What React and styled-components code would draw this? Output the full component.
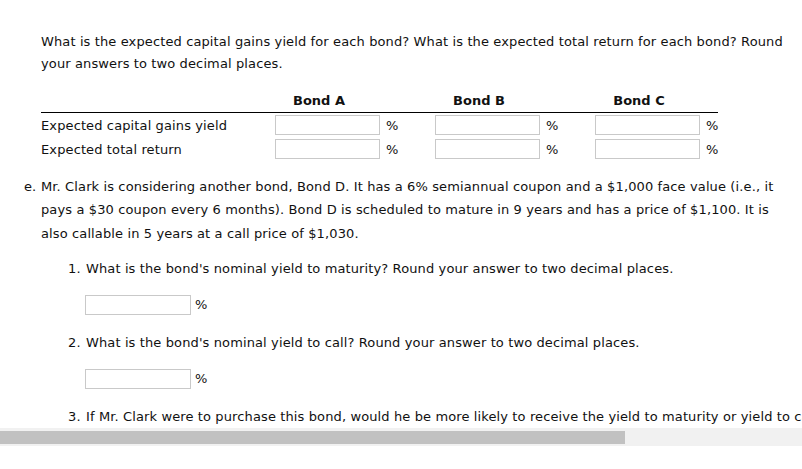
import React from "react";
import styled, { createGlobalStyle } from "styled-components";

const Global = createGlobalStyle`
  html, body { margin: 0; padding: 0; background: #fff; }
  body {
    font-family: "DejaVu Sans", Verdana, sans-serif;
    font-size: 13px;
    letter-spacing: 0.12px;
    color: #111;
  }
`;

const Viewport = styled.div`
  width: 802px;
  height: 428px;
  overflow: hidden;
`;

const Content = styled.div`
  width: 1029px;
  padding: 31px 0 0 24px;
  box-sizing: border-box;
`;

const Section = styled.div`
  width: 771px;
`;

const Para = styled.p`
  margin: 0 0 0 17px;
  line-height: 22px;
`;

const Table = styled.div`
  margin: 15px 0 0 17px;
  width: 677px;
  display: grid;
  grid-template-columns: 234px 105px 55px 105px 55px 105px 18px;
`;

const HeadCell = styled.div`
  line-height: 22px;
  font-weight: bold;
  letter-spacing: 0;
  text-align: center;
  padding-right: ${(p) => (p.$head ? "17px" : "0")};
  border-bottom: 1px solid #000;
`;

const Cell = styled.div`
  height: 24px;
  display: flex;
  align-items: center;
  padding-left: ${(p) => p.$pad || 0}px;
  white-space: nowrap;
`;

const Field = styled.input`
  box-sizing: border-box;
  width: ${(p) => p.$w || 105}px;
  height: 20px;
  margin: 0;
  padding: 0 3px;
  border: 1px solid #c9c9c9;
  border-radius: 0;
  background: #fff;
  font: inherit;
  outline: none;
`;

const Lettered = styled.div`
  margin-top: 14px;
  display: grid;
  grid-template-columns: 17px 1fr;
  line-height: 23.4px;
`;

const Marker = styled.span`
  white-space: nowrap;
`;

const SubList = styled.div`
  margin: 12px 0 0 44px;
  display: flex;
  flex-direction: column;
  gap: 16.6px;
`;

const SubItem = styled.div`
  display: grid;
  grid-template-columns: 18px 1fr;
  line-height: 23.4px;
`;

const Question = styled.div`
  white-space: ${(p) => (p.$nowrap ? "nowrap" : "normal")};
`;

const Answer = styled.div`
  grid-column: 2;
  margin-top: 14px;
  margin-left: -1px;
  display: flex;
  align-items: center;
  gap: 4px;
  height: 20px;
  line-height: 20px;
`;

const Track = styled.div`
  width: 802px;
  height: 18px;
  box-sizing: border-box;
  padding: 3px 0 2px;
  background: #f1f1f1;
`;

const Thumb = styled.div`
  width: ${(p) => p.$w}px;
  height: 13px;
  background: #c1c1c1;
`;

const bonds = ["Bond A", "Bond B", "Bond C"];
const rows = ["Expected capital gains yield", "Expected total return"];

export default function App() {
  return (
    <>
      <Global />
      <Viewport>
        <Content>
          <Section>
            <Para>
              What is the expected capital gains yield for each bond? What is
              the expected total return for each bond? Round your answers to
              two decimal places.
            </Para>
            <Table>
              <HeadCell />
              {bonds.map((b) => (
                <React.Fragment key={b}>
                  <HeadCell $head>{b}</HeadCell>
                  <HeadCell />
                </React.Fragment>
              ))}
              {rows.map((r) => (
                <React.Fragment key={r}>
                  <Cell>{r}</Cell>
                  {bonds.map((b) => (
                    <React.Fragment key={b}>
                      <Cell>
                        <Field type="text" aria-label={`${r} ${b}`} />
                      </Cell>
                      <Cell $pad={6}>%</Cell>
                    </React.Fragment>
                  ))}
                </React.Fragment>
              ))}
            </Table>
            <Lettered>
              <Marker>e.</Marker>
              <div>
                Mr. Clark is considering another bond, Bond D. It has a 6%
                semiannual coupon and a $1,000 face value (i.e., it pays a $30
                coupon every 6 months). Bond D is scheduled to mature in 9 years
                and has a price of $1,100. It is also callable in 5 years at a
                call price of $1,030.
              </div>
            </Lettered>
            <SubList>
              <SubItem>
                <Marker>1.</Marker>
                <Question>
                  What is the bond's nominal yield to maturity? Round your
                  answer to two decimal places.
                </Question>
                <Answer>
                  <Field type="text" $w={106} aria-label="YTM" />%
                </Answer>
              </SubItem>
              <SubItem>
                <Marker>2.</Marker>
                <Question>
                  What is the bond's nominal yield to call? Round your answer to
                  two decimal places.
                </Question>
                <Answer>
                  <Field type="text" $w={106} aria-label="YTC" />%
                </Answer>
              </SubItem>
              <SubItem>
                <Marker>3.</Marker>
                <Question $nowrap>
                  If Mr. Clark were to purchase this bond, would he be more
                  likely to receive the yield to maturity or yield to call?
                </Question>
              </SubItem>
            </SubList>
          </Section>
        </Content>
      </Viewport>
      <Track>
        <Thumb $w={625} />
      </Track>
    </>
  );
}
